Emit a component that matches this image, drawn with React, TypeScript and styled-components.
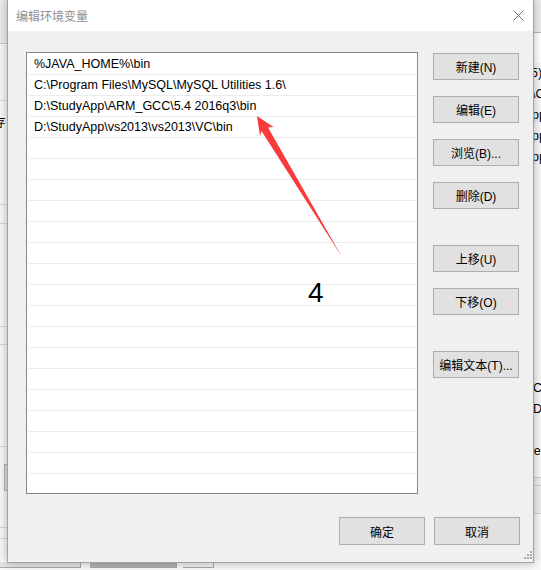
import React from "react";
import styled, { createGlobalStyle } from "styled-components";

const Global = createGlobalStyle`
  html, body { margin: 0; padding: 0; }
  body {
    width: 541px;
    height: 570px;
    overflow: hidden;
    background: #f0f0f0;
    font-family: "Liberation Sans", "Noto Sans CJK SC", sans-serif;
  }
`;

const Desktop = styled.div`
  position: relative;
  width: 541px;
  height: 570px;
  overflow: hidden;
  background: #f4f4f4;
`;

/* ---------- background window (mostly hidden behind the dialog) ---------- */
const BackWindow = styled.div`
  display: grid;
  grid-template-columns: 7px 1fr 8px;
  height: 570px;
`;

const Strip = styled.div`
  display: flex;
  flex-direction: column;
  overflow: hidden;
  background: #f7f7f7;
`;

const Band = styled.div<{ $h: number; $bg?: string; $line?: string }>`
  flex: none;
  height: ${(p) => p.$h}px;
  background: ${(p) => p.$bg ?? "transparent"};
  border-bottom: ${(p) => (p.$line ? `1px solid ${p.$line}` : "none")};
`;

const FragRow = styled.div<{ $shift: number }>`
  flex: none;
  height: 21px;
  line-height: 21px;
  font-size: 12.5px;
  color: #000;
  white-space: nowrap;
  margin-left: ${(p) => p.$shift}px;
`;

const BackButton = styled.div`
  flex: none;
  height: 27px;
  margin-left: 4px;
  width: 20px;
  box-sizing: border-box;
  background: #dddddd;
  border: 1px solid #b0b0b0;
`;

const Middle = styled.div`
  display: flex;
  flex-direction: column;
  justify-content: flex-end;
  background: #f7f7f7;
`;

const BottomBar = styled.div`
  display: flex;
  height: 8px;
  margin-left: -7px;
  align-items: flex-start;
`;

const BottomBox = styled.div<{ $w: number; $bg: string; $ml?: number }>`
  width: ${(p) => p.$w}px;
  height: 5px;
  margin-left: ${(p) => p.$ml ?? 0}px;
  background: ${(p) => p.$bg};
  border-bottom: 1px solid #a8a8a8;
  border-right: 1px solid #a8a8a8;
`;

/* ---------- dialog ---------- */
const Dialog = styled.div`
  position: absolute;
  left: 7px;
  top: -1px;
  width: 527px;
  height: 564px;
  box-sizing: border-box;
  display: flex;
  flex-direction: column;
  background: #f0f0f0;
  border: 1px solid #a3a3a3;
  box-shadow: 0 0 9px rgba(0, 0, 0, 0.28);
`;

const TitleBar = styled.div`
  flex: none;
  height: 31px;
  background: #ffffff;
  display: flex;
  align-items: center;
  justify-content: space-between;
  padding: 0 9px 0 8px;
`;

const Title = styled.span`
  font-family: "Noto Sans CJK SC", sans-serif;
  font-size: 12px;
  color: #8f8f8f;
  letter-spacing: 0px;
`;

const CloseIcon = styled.svg`
  width: 11px;
  height: 11px;
  display: block;
`;

const Body = styled.div`
  display: flex;
  padding: 21px 13px 0 18px;
  gap: 15px;
`;

const ListBox = styled.div`
  width: 392px;
  height: 442px;
  box-sizing: border-box;
  border: 1px solid #828790;
  background: #ffffff;
  padding-top: 1px;
  overflow: hidden;
`;

const Row = styled.div`
  height: 20px;
  margin: 0 1px;
  border-bottom: 1px solid #ececec;
  padding-left: 6px;
  font-size: 12.5px;
  line-height: 20px;
  color: #000;
  white-space: nowrap;
`;

const ButtonColumn = styled.div`
  display: flex;
  flex-direction: column;
  padding-top: 1px;
`;

const Button = styled.div<{ $mt?: number; $w?: number; $h?: number }>`
  width: ${(p) => p.$w ?? 86}px;
  height: ${(p) => p.$h ?? 27}px;
  margin-top: ${(p) => p.$mt ?? 0}px;
  box-sizing: border-box;
  background: #e1e1e1;
  border: 1px solid #adadad;
  display: flex;
  align-items: center;
  justify-content: center;
  font-size: 12px;
  color: #000;
  white-space: nowrap;
`;

const Footer = styled.div`
  display: flex;
  justify-content: flex-end;
  gap: 9px;
  padding: 23px 13px 0 0;
`;

const Grip = styled.svg`
  position: absolute;
  right: 1px;
  bottom: 1px;
  width: 10px;
  height: 10px;
`;

/* ---------- annotation ---------- */
const Overlay = styled.svg`
  position: absolute;
  left: 0;
  top: 0;
  width: 541px;
  height: 570px;
  pointer-events: none;
`;

const Label = styled.div`
  position: absolute;
  left: 308px;
  top: 279px;
  font-family: "Liberation Sans", sans-serif;
  font-size: 28px;
  line-height: 28px;
  color: #000;
`;

const paths = [
  "%JAVA_HOME%\\bin",
  "C:\\Program Files\\MySQL\\MySQL Utilities 1.6\\",
  "D:\\StudyApp\\ARM_GCC\\5.4 2016q3\\bin",
  "D:\\StudyApp\\vs2013\\vs2013\\VC\\bin",
];

const rows = Array.from({ length: 21 }, (_, i) => paths[i] ?? "");

const sideButtons: { label: string; mt: number }[] = [
  { label: "新建(N)", mt: 0 },
  { label: "编辑(E)", mt: 16 },
  { label: "浏览(B)...", mt: 16 },
  { label: "删除(D)", mt: 16 },
  { label: "上移(U)", mt: 36 },
  { label: "下移(O)", mt: 16 },
  { label: "编辑文本(T)...", mt: 36 },
];

const gripDots: [number, number][] = [
  [8, 0],
  [5, 3],
  [8, 3],
  [2, 6],
  [5, 6],
  [8, 6],
];

export default function App() {
  return (
    <>
      <Global />
      <Desktop>
        <BackWindow>
          <Strip>
            <Band $h={43} $bg="#ebebeb" $line="#c6c6c6" />
            <Band $h={56} $bg="#f6f6f6" $line="#d6d6d6" />
            <Band $h={12} />
            <FragRow $shift={-7}>存</FragRow>
            <Band $h={70} $line="#d6d6d6" />
            <Band $h={18} $line="#d6d6d6" />
            <Band $h={102} $line="#d6d6d6" />
            <Band $h={17} $line="#d6d6d6" />
            <Band $h={101} $line="#d6d6d6" />
            <Band $h={17} />
            <BackButton />
            <Band $h={36} $line="#d6d6d6" />
            <Band $h={10} $line="#d6d6d6" />
          </Strip>
          <Middle>
            <BottomBar>
              <BottomBox $w={80} $bg="#e4e4e4" />
              <BottomBox $w={86} $bg="#b2b2b2" $ml={9} />
              <BottomBox $w={30} $bg="#f0f0f0" $ml={6} />
            </BottomBar>
          </Middle>
          <Strip>
            <Band $h={32} $bg="#ececec" $line="#b4b4b4" />
            <Band $h={30} $bg="#ffffff" />
            <FragRow $shift={-2}>5)</FragRow>
            <FragRow $shift={-1}>\C</FragRow>
            <FragRow $shift={-1}>pp</FragRow>
            <FragRow $shift={-1}>pp</FragRow>
            <FragRow $shift={-1}>pp</FragRow>
            <Band $h={210} />
            <FragRow $shift={0}>C</FragRow>
            <FragRow $shift={0}>D;</FragRow>
            <Band $h={21} />
            <FragRow $shift={-2}>le</FragRow>
            <Band $h={15} $line="#cfcfcf" />
            <Band $h={7} $bg="#eeeeee" $line="#cfcfcf" />
            <Band $h={27} $bg="#eeeeee" $line="#cfcfcf" />
          </Strip>
        </BackWindow>

        <Dialog>
          <TitleBar>
            <Title>编辑环境变量</Title>
            <CloseIcon viewBox="0 0 11 11">
              <path d="M0.5 0.5 L10.5 10.5 M10.5 0.5 L0.5 10.5" stroke="#707070" strokeWidth="1" fill="none" />
            </CloseIcon>
          </TitleBar>
          <Body>
            <ListBox>
              {rows.map((r, i) => (
                <Row key={i}>{r}</Row>
              ))}
            </ListBox>
            <ButtonColumn>
              {sideButtons.map((b) => (
                <Button key={b.label} $mt={b.mt}>
                  {b.label}
                </Button>
              ))}
            </ButtonColumn>
          </Body>
          <Footer>
            <Button $h={28}>确定</Button>
            <Button $h={28}>取消</Button>
          </Footer>
          <Grip viewBox="0 0 10 10">
            {gripDots.map(([x, y]) => (
              <rect key={`${x}-${y}`} x={x} y={y} width="2" height="2" fill="#a9a9a9" />
            ))}
          </Grip>
        </Dialog>

        <Overlay viewBox="0 0 541 570">
          <polygon
            points="257,116 273.5,127 268,127.5 342,257 261.5,131 260,136"
            fill="#f93b3b"
          />
        </Overlay>
        <Label>4</Label>
      </Desktop>
    </>
  );
}
